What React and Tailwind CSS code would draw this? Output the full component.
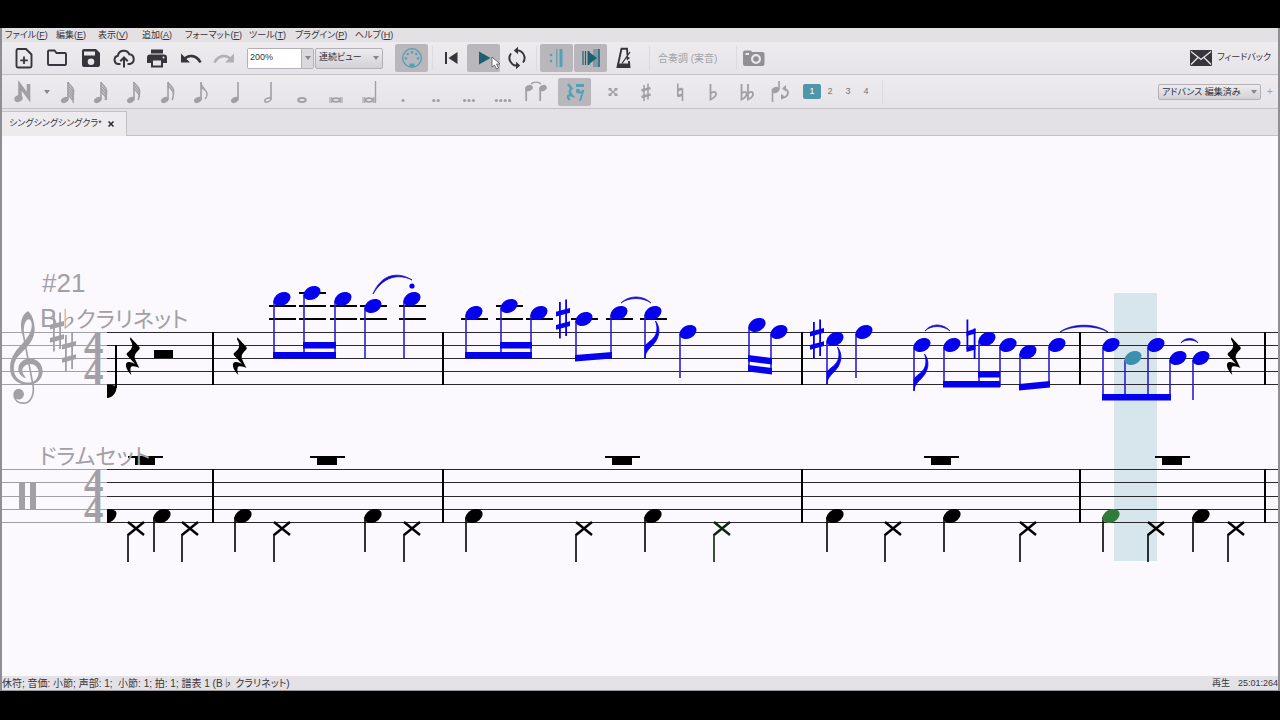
import { useState } from 'react';
import clsx from 'clsx';

const MENUS = [
  { label: 'ファイル', key: 'F', width: 'w-[51px]' },
  { label: '編集', key: 'E', width: 'w-[42px]' },
  { label: '表示', key: 'V', width: 'w-[44px]' },
  { label: '追加', key: 'A', width: 'w-[43px]' },
  { label: 'フォーマット', key: 'F', width: 'w-[64px]' },
  { label: 'ツール', key: 'T', width: 'w-[46px]' },
  { label: 'プラグイン', key: 'P', width: 'w-[60px]' },
  { label: 'ヘルプ', key: 'H', width: 'w-[46px]' },
];

// ---------- Toolbar icons ----------

function Icon({ children, size = 'size-6', className }) {
  return (
    <svg viewBox="0 0 24 24" className={clsx('shrink-0', size, className)} fill="none" stroke="currentColor" strokeWidth="2" aria-hidden="true">
      {children}
    </svg>
  );
}

const FileNewIcon = () => (
  <Icon>
    <path d="M5 3h9l5.500 5.500V20a1.500 1.500 0 0 1-1.500 1.500H6A1.500 1.500 0 0 1 4.500 20V4.500A1.500 1.500 0 0 1 6 3z" strokeWidth="1.900" />
    <path d="M12 10.500v7.500M8.300 14.300h7.500" strokeWidth="1.800" />
  </Icon>
);

const FolderIcon = () => (
  <Icon>
    <path d="M3 5.500a1 1 0 0 1 1-1h5.500l2 2.500H20a1 1 0 0 1 1 1v10a1 1 0 0 1-1 1H4a1 1 0 0 1-1-1z" strokeWidth="1.900" />
  </Icon>
);

const SaveIcon = () => (
  <Icon>
    <path fillRule="evenodd" fill="currentColor" stroke="none" d="M5 3h12l4 4v12a2 2 0 0 1-2 2H5a2 2 0 0 1-2-2V5a2 2 0 0 1 2-2zm0 2.500v4h11v-4zm7 7a3.300 3.300 0 1 0 0 6.600 3.300 3.300 0 0 0 0-6.600z" />
  </Icon>
);

const CloudIcon = () => (
  <Icon>
    <path d="M8.500 18H6.500a4.200 4.200 0 0 1-.6-8.300A6 6 0 0 1 17.300 8.300a4.900 4.900 0 0 1 .4 9.700H15.500" />
    <path d="M12 21.500V12M8.300 15.200 12 11.500l3.700 3.700" />
  </Icon>
);

const PrintIcon = () => (
  <Icon>
    <path fillRule="evenodd" fill="currentColor" stroke="none" d="M6 3.500h12V7.500H6zM5 8.500h14a3 3 0 0 1 3 3V17h-4v4.500H6V17H2v-5.500a3 3 0 0 1 3-3zm3 6v5h8v-5zm10.500-4a1 1 0 1 0 0 2 1 1 0 0 0 0-2z" />
  </Icon>
);

const UndoIcon = ({ flip }) => (
  <Icon className={flip && '-scale-x-100 text-[#b2b0b4]'}>
    <path d="M5 13.500C9 8.500 17.500 8.500 21.500 16.500" strokeWidth="2.600" />
    <path d="M2 7.500v9h9z" fill="currentColor" stroke="none" />
  </Icon>
);

const MidiIcon = () => (
  <Icon>
    <circle cx="12" cy="12" r="9.300" strokeWidth="1.300" />
    <g fill="currentColor" stroke="none">
      <circle cx="6" cy="12.500" r="1.300" />
      <circle cx="7.700" cy="8" r="1.300" />
      <circle cx="12" cy="6.200" r="1.300" />
      <circle cx="16.300" cy="8" r="1.300" />
      <circle cx="18" cy="12.500" r="1.300" />
      <path d="M9.500 17.500h5v3.500h-5z" />
    </g>
  </Icon>
);

const RewindIcon = () => (
  <Icon>
    <path d="M6 6v12" />
    <path d="M17.500 6v12L8.500 12z" fill="currentColor" stroke="none" />
  </Icon>
);

const PlayIcon = () => (
  <Icon className="text-[#1d6072]">
    <path d="M7 5.500v13L18.500 12z" fill="currentColor" stroke="none" />
  </Icon>
);

const LoopIcon = () => (
  <Icon>
    <path d="M7.500 18.200A7.500 7.500 0 0 1 6 7.500M16.500 5.800A7.500 7.500 0 0 1 18 16.500M11.500 4.500h1.500c1.300 0 2.500.5 3.500 1.300M12.500 19.500H11c-1.300 0-2.500-.5-3.500-1.300" />
    <path d="M13 .8v7.400L8.800 4.500zM11 15.800v7.400l4.200-3.700z" fill="currentColor" stroke="none" />
  </Icon>
);

const RepeatIcon = () => (
  <Icon>
    <circle cx="6" cy="9" r="1.300" fill="currentColor" stroke="none" />
    <circle cx="6" cy="15" r="1.300" fill="currentColor" stroke="none" />
    <path d="M11.800 3v18" strokeWidth="1.200" />
    <path d="M16 3v18" strokeWidth="3" />
  </Icon>
);

const PanIcon = () => (
  <Icon>
    <path d="M14 3h5.500v18H14z" fill="#7e9ba5" stroke="none" />
    <path d="M4 5v14M6.500 5v14" strokeWidth="1.200" />
    <path d="M8.500 5h2v14h-2z" fill="currentColor" stroke="none" />
    <path d="M9.500 5.500v13L18 12z" fill="currentColor" stroke="none" />
    <path d="M20 3v18" strokeWidth="1.500" />
  </Icon>
);

const MetronomeIcon = () => (
  <Icon>
    <path d="M15.500 9 15 2.800H9.500L5.500 21H17.500l-.6-6" strokeWidth="1.900" />
    <path d="M5.500 17.500h12V21h-12z" fill="currentColor" stroke="none" />
    <path d="M10 17.500 18 6" strokeWidth="1.300" />
    <path d="m14 9.500 4 2.500-3 2.500z" fill="currentColor" stroke="none" />
  </Icon>
);

const CameraIcon = () => (
  <Icon className="text-[#918f94]">
    <path fillRule="evenodd" fill="currentColor" stroke="none" d="M3 4.500h6l1 1.500h10.500a2 2 0 0 1 2 2v10a2 2 0 0 1-2 2H3a2 2 0 0 1-2-2V6.500a2 2 0 0 1 2-2zM14 8a5 5 0 1 0 0 10 5 5 0 0 0 0-10zM3.500 7v2H7V7z" />
    <circle cx="14" cy="13" r="2.800" fill="currentColor" stroke="none" />
  </Icon>
);

const MailIcon = () => (
  <svg viewBox="0 0 22 16" className="h-4 w-[22px]" aria-hidden="true">
    <rect width="22" height="16" rx="1" fill="#36353b" />
    <path d="m1 1.500 10 8 10-8M1 14.500l7-7M21 14.500l-7-7" fill="none" stroke="#e9e8eb" strokeWidth="1.300" />
  </svg>
);

function NoteIcon({ flags = 0, head = 'full' }) {
  const x = flags > 0 ? 11 : 14;
  return (
    <Icon>
      <ellipse
        cx={x - 3.200}
        cy="20"
        rx={head === 'half' ? 3.200 : 4}
        ry={head === 'half' ? 1.700 : 2.700}
        transform={`rotate(-25 ${x - 3.200} 20)`}
        fill={head === 'half' ? 'none' : 'currentColor'}
        strokeWidth={head === 'half' ? 1.400 : 0}
      />
      <path d={`M${x} 2v17.500`} strokeWidth="1.600" />
      {flags === 1 && <path d="M11 3c0 5 7 7 6 12-.2 1.500-1 3-2 4" strokeWidth="1.400" />}
      {flags === 1 && <path d="M11 3c0 4 3 6 4.500 8.500L11 8z" fill="currentColor" stroke="none" />}
      {flags > 1 && Array.from({ length: flags }, (_, i) => (
        <path key={i} d={`M11 ${2 + i * 3}c1 3.500 5.500 4 5.500 9`} strokeWidth="1.500" />
      ))}
      {flags > 1 && <path d="M16.500 10c0 4 .2 7-1.500 10" strokeWidth="1.500" />}
    </Icon>
  );
}

const WholeIcon = () => (
  <Icon>
    <ellipse cx="12" cy="20" rx="3.800" ry="2" strokeWidth="2" />
  </Icon>
);

const BreveIcon = ({ stem }) => (
  <Icon>
    <ellipse cx="12" cy="20" rx="3.500" ry="1.900" strokeWidth="1.800" />
    <path d="M6 17v6M7.700 17v6M16.300 17v6M18 17v6" strokeWidth="1" />
    {stem && <path d="M18.500 1v22" strokeWidth="1.400" />}
  </Icon>
);

const DotsIcon = ({ count }) => (
  <Icon>
    {Array.from({ length: count }, (_, i) => (
      <circle key={i} cx={12 + (i - (count - 1) / 2) * 4.400} cy="20.500" r="1.600" fill="currentColor" stroke="none" />
    ))}
  </Icon>
);

const TieIcon = () => (
  <Icon>
    <path d="M2.200 21V8M16.200 21V8" strokeWidth="1.800" />
    <ellipse cx="5" cy="8" rx="3.900" ry="3" transform="rotate(-25 5 8)" fill="currentColor" stroke="none" />
    <ellipse cx="19" cy="8" rx="3.900" ry="3" transform="rotate(-25 19 8)" fill="currentColor" stroke="none" />
    <path d="M7 4c2-2.500 8-2.500 10 0" strokeWidth="1.400" />
  </Icon>
);

const RestIcon = () => (
  <Icon>
    <path d="m5 4 3.500 4.500c-2.500 2-2.500 3.500.5 7-5-1.500-5 1.500-2.500 4.500" strokeWidth="2.400" />
    <path d="M13 5.500h8" strokeWidth="3" />
    <circle cx="15" cy="11" r="2.200" fill="currentColor" stroke="none" />
    <path d="M15 12.500c2.500.5 4.500-.5 5.500-2.500l-3.500 11" strokeWidth="1.800" />
  </Icon>
);

const DoubleSharpIcon = () => (
  <Icon>
    <path d="m8.500 9 7 6m0-6-7 6" strokeWidth="1.500" />
    <path d="M7.500 8h3v2.500h-3zM13.500 8h3v2.500h-3zM7.500 13.500h3V16h-3zM13.500 13.500h3V16h-3z" fill="currentColor" stroke="none" />
  </Icon>
);

const SharpIcon = () => (
  <Icon>
    <path d="M10 5v16M14 3.500v16" strokeWidth="1.500" />
    <path d="m7.500 10.500 9-2.500M7.500 17l9-2.500" strokeWidth="2.400" />
  </Icon>
);

const NaturalIcon = () => (
  <Icon>
    <path d="M9.800 3.500v13M14.500 8.500V21" strokeWidth="1.600" />
    <path d="m9.800 10 4.700-1.300M9.800 16l4.700-1.300" strokeWidth="2.600" />
  </Icon>
);

const FlatIcon = () => (
  <Icon>
    <path d="M9.500 4v15.500c3-1.500 6-4 5.500-6.300-.5-2-3.500-1.700-5.500.3" strokeWidth="1.800" />
  </Icon>
);

const DoubleFlatIcon = () => (
  <Icon>
    <path d="M6.500 4v15.500c3-1.500 5.500-4 5-6.300-.5-2-3-1.700-5 .3M13 4v15.500c3-1.500 5.500-4 5-6.300-.5-2-3-1.700-5 .3" strokeWidth="1.800" />
  </Icon>
);

const FlipIcon = () => (
  <Icon>
    <path d="M4.500 22V11M11 9.500V1" strokeWidth="1.600" />
    <ellipse cx="7.500" cy="10" rx="4" ry="3" transform="rotate(-25 7.500 10)" fill="currentColor" stroke="none" />
    <path d="M17 9c4 1.500 4 6 0 8" strokeWidth="1.800" />
    <path d="m14 8.500 4-3.500v6.500zM13 14v5.500l5.500-2z" fill="currentColor" stroke="none" />
  </Icon>
);

const InputModeIcon = () => (
  <Icon>
    <path d="M8 19V5.500l8.500 11.500V4" strokeWidth="3.600" />
    <ellipse cx="6.500" cy="18.500" rx="4.300" ry="3.300" transform="rotate(-25 6.500 18.500)" fill="currentColor" stroke="none" />
  </Icon>
);

const Caret = ({ className }) => (
  <svg viewBox="0 0 6 4" className={clsx('h-1 w-1.5', className)} aria-hidden="true">
    <path d="M0 0h6L3 4z" fill="#88868b" />
  </svg>
);

// ---------- Toolbar pieces ----------

function ToolButton({ label, active, className, children }) {
  return (
    <button
      type="button"
      aria-label={label}
      title={label}
      className={clsx('relative flex h-7 items-center justify-center', active && 'rounded-xs bg-[#b9b7bb] text-[#55a0b4]', className)}
    >
      {children}
    </button>
  );
}

const Separator = () => <div className="h-6 w-px shrink-0 bg-[#dcdade]" />;

function Select({ label, value, className }) {
  return (
    <div className={clsx('relative', className)}>
      <select
        aria-label={label}
        className="h-full w-full appearance-none rounded-xs border border-[#b3b1b6] bg-linear-to-b from-[#ecebee] to-[#d3d1d5] pl-[3px] pr-3 text-[9px] text-[#333238]"
      >
        <option>{value}</option>
      </select>
      <Caret className="pointer-events-none absolute right-1 top-1/2 -translate-y-1/2" />
    </div>
  );
}

function MenuBar() {
  return (
    <nav className="flex h-[14px] overflow-hidden bg-[#e3e1e4] pl-[3px] text-[9px] leading-[12px]">
      {MENUS.map((m) => (
        <button key={m.label} type="button" className={clsx('shrink-0 whitespace-nowrap text-left', m.width)}>
          {m.label}(<u>{m.key}</u>)
        </button>
      ))}
    </nav>
  );
}

function MainToolbar() {
  return (
    <div className="flex h-[33px] items-center border-b border-[#c3c1c5] bg-linear-to-b from-[#edebee] to-[#e6e4e8] pl-[5px] pr-[7px]">
      <div className="grid w-[234px] shrink-0 grid-cols-7">
        <ToolButton label="新規"><FileNewIcon /></ToolButton>
        <ToolButton label="開く"><FolderIcon /></ToolButton>
        <ToolButton label="保存"><SaveIcon /></ToolButton>
        <ToolButton label="オンラインに保存"><CloudIcon /></ToolButton>
        <ToolButton label="印刷"><PrintIcon /></ToolButton>
        <ToolButton label="元に戻す"><UndoIcon /></ToolButton>
        <ToolButton label="やり直す"><UndoIcon flip /></ToolButton>
      </div>
      <div className="ml-1.5 flex h-[21px] shrink-0 rounded-xs border border-[#b3b1b6]">
        <input aria-label="ズーム" defaultValue="200%" className="w-[53px] bg-white pl-0.5 text-[9px]" />
        <button type="button" aria-label="ズームを選択" className="flex w-3 items-center justify-center border-l border-[#b3b1b6] bg-[#dbd9dd]">
          <Caret />
        </button>
      </div>
      <Select label="表示モード" value="連続ビュー" className="ml-px h-[21px] w-[68px] shrink-0" />
      <div className="ml-3 flex shrink-0 items-center">
        <ToolButton label="MIDI入力" active className="w-[33px]"><MidiIcon /></ToolButton>
        <div className="mx-1 flex"><Separator /></div>
        <ToolButton label="先頭に戻る" className="w-[30px]"><RewindIcon /></ToolButton>
        <ToolButton label="再生" active className="w-[33px]">
          <PlayIcon />
          <svg viewBox="0 0 10 14" className="absolute left-6 top-3 h-[14px] w-[10px]" aria-hidden="true">
            <path d="M1 1v10l2.500-2 2 4 2-1-2-4H9z" fill="#fff" stroke="#55535a" strokeWidth=".8" />
          </svg>
        </ToolButton>
        <ToolButton label="ループ再生" className="w-[33px]"><LoopIcon /></ToolButton>
        <div className="mx-[3px] flex"><Separator /></div>
        <ToolButton label="反復記号を再生" active className="w-[33px]"><RepeatIcon /></ToolButton>
        <ToolButton label="自動スクロール" active className="ml-px w-[33px]">
          <span className="text-[#1d6072]"><PanIcon /></span>
        </ToolButton>
        <ToolButton label="メトロノーム" className="w-[34px]"><MetronomeIcon /></ToolButton>
      </div>
      <div className="ml-2 flex shrink-0 items-center text-[#a5a3a8]">
        <Separator />
        <button type="button" className="ml-2 w-[78px] whitespace-nowrap text-left">合奏調 (実音)</button>
        <Separator />
        <ToolButton label="イメージキャプチャ" className="w-[33px]"><CameraIcon /></ToolButton>
      </div>
      <button type="button" className="ml-auto flex shrink-0 items-center gap-[5px] whitespace-nowrap text-[9px]">
        <MailIcon />
        フィードバック
      </button>
    </div>
  );
}

function NoteToolbar() {
  const [voice, setVoice] = useState(1);

  return (
    <div className="flex h-[34px] items-center border-b border-[#c3c1c5] bg-linear-to-b from-[#edebee] to-[#e6e4e8] pl-[5px] pr-[5px] text-[#a19fa4]">
      <ToolButton label="音符入力" className="w-[34px] shrink-0"><InputModeIcon /></ToolButton>
      <button type="button" aria-label="入力モード" className="flex w-[11px] shrink-0 justify-center"><Caret /></button>
      <div className="grid w-[501px] shrink-0 grid-cols-15">
        <ToolButton label="128分音符"><NoteIcon flags={5} /></ToolButton>
        <ToolButton label="64分音符"><NoteIcon flags={4} /></ToolButton>
        <ToolButton label="32分音符"><NoteIcon flags={3} /></ToolButton>
        <ToolButton label="16分音符"><NoteIcon flags={2} /></ToolButton>
        <ToolButton label="8分音符"><NoteIcon flags={1} /></ToolButton>
        <ToolButton label="4分音符"><NoteIcon /></ToolButton>
        <ToolButton label="2分音符"><NoteIcon head="half" /></ToolButton>
        <ToolButton label="全音符"><WholeIcon /></ToolButton>
        <ToolButton label="倍全音符"><BreveIcon /></ToolButton>
        <ToolButton label="ロンガ"><BreveIcon stem /></ToolButton>
        <ToolButton label="付点"><DotsIcon count={1} /></ToolButton>
        <ToolButton label="複付点"><DotsIcon count={2} /></ToolButton>
        <ToolButton label="三重付点"><DotsIcon count={3} /></ToolButton>
        <ToolButton label="四重付点"><DotsIcon count={4} /></ToolButton>
        <ToolButton label="タイ"><TieIcon /></ToolButton>
      </div>
      <ToolButton label="休符" active className="ml-[5px] w-[33px] shrink-0"><RestIcon /></ToolButton>
      <div className="ml-[5px] grid w-[201px] shrink-0 grid-cols-6">
        <ToolButton label="ダブルシャープ"><DoubleSharpIcon /></ToolButton>
        <ToolButton label="シャープ"><SharpIcon /></ToolButton>
        <ToolButton label="ナチュラル"><NaturalIcon /></ToolButton>
        <ToolButton label="フラット"><FlatIcon /></ToolButton>
        <ToolButton label="ダブルフラット"><DoubleFlatIcon /></ToolButton>
        <ToolButton label="方向を反転"><FlipIcon /></ToolButton>
      </div>
      <div className="ml-1.5 mr-[7px] flex shrink-0">
        {[1, 2, 3, 4].map((n) => (
          <button
            key={n}
            type="button"
            onClick={() => setVoice(n)}
            className={clsx('h-[15px] w-[18px] rounded-xs text-[9px] leading-[15px]', voice === n ? 'bg-[#4e97ab] text-white' : 'text-[#77757b]')}
          >
            {n}
          </button>
        ))}
      </div>
      <Separator />
      <Select label="ワークスペース" value="アドバンス 編集済み" className="ml-auto h-4 w-[103px] shrink-0" />
      <button type="button" aria-label="ワークスペースを追加" className="ml-1.5 w-1.5">+</button>
    </div>
  );
}

function TabBar() {
  return (
    <div className="flex h-[27px] border-b border-[#c3c1c5] bg-[#e3e1e5] pt-0.5">
      <div className="-mb-px flex w-[125px] items-center gap-1.5 whitespace-nowrap border-r border-t border-[#c3c1c5] bg-[#edebee] pl-[7px] text-[9px]">
        <span>シングシングシングクラ*</span>
        <button type="button" aria-label="閉じる">
          <svg viewBox="0 0 6 6" className="size-1.5" aria-hidden="true">
            <path d="m.5.5 5 5m0-5-5 5" stroke="#29282d" strokeWidth="1.500" />
          </svg>
        </button>
      </div>
    </div>
  );
}

// ---------- Score ----------

const BLUE = '#0500ee';
const TOP_STAFF = [332, 345, 358, 371, 384];
const DRUM_STAFF = [469, 482, 496, 509, 522];
const BARLINES = [212, 442, 801, 1079, 1264];

// [x, y, stem end, flag]
const NOTES = [
  [282, 299, 358], [312, 293, 352], [343, 299, 358], [373, 306, 358], [412, 299, 358],
  [474, 313, 358], [509, 306, 352], [539, 313, 358], [584, 319, 360], [619, 313, 358],
  [653, 313, 358, true], [688, 332, 378], [757, 325, 371], [779, 332, 374],
  [835, 339, 384, true], [864, 332, 378], [922, 345, 391, true], [952, 345, 387],
  [987, 339, 382], [1008, 345, 387], [1028, 352, 390], [1057, 345, 386],
  [1111, 345, 400], [1133, 358, 400], [1156, 345, 400], [1178, 358, 400], [1201, 358, 400],
];

// [x1, y1, x2, y2] along the upper edge
const BEAMS = [
  [274, 352, 336, 352], [304, 342, 336, 342],
  [466, 352, 532, 352], [501, 342, 532, 342], [576, 355, 612, 352],
  [749, 355, 772, 358], [749, 365, 772, 368],
  [944, 381, 1000, 381], [979, 371, 1000, 371], [1020, 384, 1050, 381],
  [1103, 394, 1171, 394],
];

const LEDGERS = [
  [282, 306], [282, 319], [312, 293], [312, 306], [312, 319], [343, 306], [343, 319],
  [373, 306], [373, 319], [412, 306], [412, 319],
  [474, 319], [509, 306], [509, 319], [539, 319], [584, 319], [619, 319], [653, 319],
];

const TIES = [
  'M373 294C381 274 398 271 412 280C398 273 383 277 373 294Z',
  'M621 303C629 295 643 295 651 303C643 297 629 297 621 303Z',
  'M925 331C931 323 943 323 950 331C943 325 931 325 925 331Z',
  'M1060 332C1072 323 1096 323 1108 332C1096 325 1072 325 1060 332Z',
  'M1181 343C1184 337 1195 337 1198 343C1195 339 1184 339 1181 343Z',
];

const KICKS = [162, 243, 373, 474, 653, 835, 952, 1111, 1201];
const HATS = [136, 190, 282, 412, 584, 722, 893, 1028, 1156, 1236];
const WHOLE_RESTS = [145, 327, 622, 941, 1172];

const Head = ({ x, y, fill }) => (
  <ellipse cx={x} cy={y} rx="9.100" ry="6.400" transform={`rotate(-28 ${x} ${y})`} fill={fill} />
);

const Sharp = ({ x, y, color }) => (
  <g transform={`translate(${x} ${y})`} fill={color}>
    <path d="M-4-17h1.800v36.500H-4zM2.200-19.500H4V17H2.200z" />
    <path d="m-7-7.300 14-3.700v4.800L-7-2.500zM-7 6l14-3.700v4.800L-7 10.800z" />
  </g>
);

const Natural = ({ x, y, color }) => (
  <g transform={`translate(${x} ${y})`} fill={color}>
    <path d="M-4.500-19.500h1.800v30h-1.800zM2.700-10.500h1.800v30H2.700z" />
    <path d="M-4.500-7.500 4.500-10.500v5l-9 2.500zM-4.500 8l9-2.500v5l-9 2.500z" />
  </g>
);

const QuarterRest = ({ x, y }) => (
  <path
    transform={`translate(${x} ${y}) scale(.333)`}
    d="M-8-56 19-27C21-24 21-22 18-19C8-9 2-2 7 11L19 36C8 30-5 28-7 35C-9 42-7 50-5 57C-18 44-24 30-20 22C-16 15-4 18 6 24L-18-2C-20-6-20-7-15-11C-1-22 2-32-9-50Z"
  />
);

function TrebleClef() {
  return (
    <g transform="translate(0 260) scale(.333)">
      <path
        fill="currentColor"
        d="M84 153C98 165 104 188 104 210C102 250 72 268 54 290C38 310 40 335 46 346C56 364 74 369 88 368C106 367 116 352 116 337C115 322 104 312 90 312C74 313 64 325 68 338C70 345 76 350 78 355C62 350 54 338 55 324C57 308 72 296 90 296C112 297 128 312 128 335C128 360 108 375 84 375C50 375 30 352 30 325C30 285 55 265 74 243C90 225 97 205 95 190C93 178 86 175 81 180C72 190 70 205 73 225L66 222C59 190 64 165 84 153Z"
      />
      <path d="M69 218L99 375C104 405 92 430 70 430C55 430 45 422 42 408" fill="none" stroke="currentColor" strokeWidth="5" />
      <circle cx="56" cy="403" r="16" fill="currentColor" />
    </g>
  );
}

function ScoreHeader() {
  return (
    <g className="text-[#a2a0a4]" fill="currentColor">
      {[...TOP_STAFF, ...DRUM_STAFF].map((y) => (
        <rect key={y} x="0" y={y} width="107" height="1" />
      ))}
      <TrebleClef />
      <Sharp x={57} y={332} color="currentColor" />
      <Sharp x={69} y={352} color="currentColor" />
      <rect x="19" y="483" width="6" height="26" />
      <rect x="30" y="483" width="6" height="26" />
      <g className="font-['Liberation_Serif',serif] text-[39px] font-bold">
        <text x="84" y="358">4</text>
        <text x="84" y="384">4</text>
        <text x="84" y="496">4</text>
        <text x="84" y="522">4</text>
      </g>
      <g className="text-[26px]">
        <text x="42" y="292">#21</text>
        <text x="40" y="327">B</text>
        <text x="57" y="327" className="text-[22px]">♭</text>
        <text x="76" y="327" className="text-[22px]">クラリネット</text>
        <text x="39" y="464" className="text-[22px]">ドラムセット</text>
      </g>
    </g>
  );
}

function Score() {
  return (
    <main className="flex grow flex-col bg-[#fbf9fd]">
      <svg className="min-h-[460px] w-full grow" role="img" aria-label="楽譜">
        <g transform="translate(-2 -136)">
          {/* playback position */}
          <rect x="1114" y="293" width="43" height="268" fill="#d7e6ec" />

          {[...TOP_STAFF, ...DRUM_STAFF].map((y) => (
            <line key={y} x1="107" x2="101%" y1={y + 0.5} y2={y + 0.5} stroke="#29282c" strokeWidth="1.200" />
          ))}
          {BARLINES.map((x) => (
            <g key={x}>
              <rect x={x} y="332" width="2" height="53" />
              <rect x={x} y="469" width="2" height="54" />
            </g>
          ))}
          {LEDGERS.map(([x, y]) => (
            <rect key={`${x}-${y}`} x={x - 13} y={y - 1} width="27" height="2" />
          ))}

          {/* first measure, partly under the header */}
          <path d="M107 385c5 0 9 0 9.500 2 0 6-4 10.500-9.500 11z" />
          <rect x="115" y="345" width="2" height="43" />
          <path d="M107 509c5 0 9 1 9.500 4 0 5-4 9-9.500 10z" />
          <rect x="154" y="350" width="19" height="8" />
          <QuarterRest x={133} y={356} />
          <QuarterRest x={240} y={356} />
          <QuarterRest x={1234} y={356} />

          {NOTES.map(([x, y, end, flag]) => (
            <g key={x}>
              <line x1={x - 8} x2={x - 8} y1={y + 2} y2={end} stroke="#2a1fd0" strokeWidth="1.600" />
              {flag && (
                <path
                  transform={`translate(${x - 8} ${end})`}
                  d="M0 0C0-7 6-10 11-17C15-24 15-31 10.500-37C12.500-31 13-25 8-19.500C4-15.500 0-14 0-11Z"
                  fill={BLUE}
                  stroke={BLUE}
                  strokeWidth=".8"
                />
              )}
              <Head x={x} y={y} fill={x === 1133 ? '#3a90ae' : BLUE} />
            </g>
          ))}
          {BEAMS.map(([x1, y1, x2, y2]) => (
            <path key={`${x1}-${y1}`} d={`M${x1 - 1} ${y1}L${x2} ${y2}V${y2 + 6.5}L${x1 - 1} ${y1 + 6.5}Z`} fill={BLUE} />
          ))}
          {TIES.map((d) => (
            <path key={d} d={d} fill={BLUE} stroke="#1a10c0" strokeWidth=".8" />
          ))}
          <circle cx="412" cy="286" r="2.600" fill={BLUE} />
          <Sharp x={563} y={319} color={BLUE} />
          <Sharp x={817} y={339} color={BLUE} />
          <Natural x={971} y={339} color={BLUE} />

          {/* drums */}
          {WHOLE_RESTS.map((x) => (
            <path key={x} d={`M${x - 17} 456h35v2h-8v7h-20v-7h-7z`} />
          ))}
          {KICKS.map((x) => (
            <g key={x}>
              <line x1={x - 8} x2={x - 8} y1="517" y2="552" stroke="#000" strokeWidth="1.600" />
              <Head x={x} y={516} fill={x === 1111 ? '#347a3c' : '#000'} />
            </g>
          ))}
          {HATS.map((x) => (
            <g key={x} stroke={x === 722 ? '#0b260b' : '#000'}>
              <path d={`M${x - 8} 522l16 13m0-13-16 13`} strokeWidth="2.400" />
              <line x1={x - 8} x2={x - 8} y1="534" y2="562" strokeWidth="1.600" />
            </g>
          ))}
          <ScoreHeader />
        </g>
      </svg>
    </main>
  );
}

function StatusBar() {
  return (
    <footer className="flex h-[15px] justify-between overflow-hidden whitespace-pre border-b border-[#98969b] bg-[#e4e2e6] leading-[15px]">
      <span>休符; 音価: 小節; 声部: 1;  小節: 1; 拍: 1; 譜表 1 (B♭ クラリネット)</span>
      <span className="flex gap-2 text-[9px]">
        <span>再生</span>
        <span>25:01:264</span>
      </span>
    </footer>
  );
}

export default function App() {
  return (
    <div className="flex min-h-screen flex-col bg-black pb-[29px] pt-7">
      <div className="flex grow flex-col overflow-hidden border-x-2 border-[#8f8e92] bg-[#e4e2e6] font-['Liberation_Sans','Noto_Sans_CJK_JP',sans-serif] text-[10px] text-[#36353b] [font-feature-settings:'palt']">
        <MenuBar />
        <MainToolbar />
        <NoteToolbar />
        <TabBar />
        <Score />
        <StatusBar />
      </div>
    </div>
  );
}
